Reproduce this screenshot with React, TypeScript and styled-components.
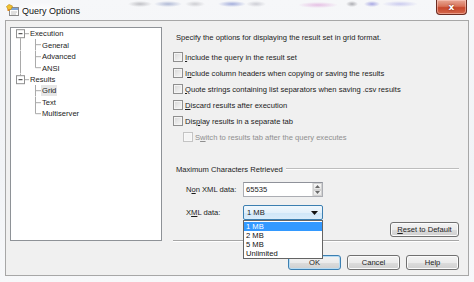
import React from "react";
import styled, { createGlobalStyle } from "styled-components";

const GlobalStyle = createGlobalStyle`
  html, body { margin: 0; padding: 0; background: #ffffff; }
  body { font-family: "Liberation Sans", Arial, sans-serif; }
  * { box-sizing: border-box; }
`;

const Frame = styled.div`
  position: relative;
  width: 474px;
  height: 282px;
  overflow: hidden;
  display: flex;
  flex-direction: column;
  background: linear-gradient(180deg, #f6f7f9 0%, #f1f3f6 60%, #f7f8fa 100%);
  font-family: "Liberation Sans", Arial, sans-serif;
  color: #1b1b1b;
`;

const TitleBar = styled.div`
  height: 20px;
  flex-shrink: 0;
  display: flex;
  align-items: flex-start;
  padding-left: 6px;
  background:
    radial-gradient(ellipse 12px 3px at 140px 4px, rgba(90, 90, 100, 0.35), transparent),
    radial-gradient(ellipse 14px 3px at 168px 4px, rgba(90, 110, 170, 0.45), transparent),
    radial-gradient(ellipse 10px 3px at 195px 4px, rgba(110, 110, 120, 0.3), transparent),
    radial-gradient(ellipse 14px 3px at 232px 4px, rgba(80, 100, 190, 0.5), transparent),
    radial-gradient(ellipse 10px 3px at 256px 4px, rgba(110, 110, 130, 0.3), transparent),
    radial-gradient(ellipse 20px 3px at 318px 5px, rgba(200, 90, 190, 0.35), transparent),
    radial-gradient(ellipse 6px 3px at 352px 4px, rgba(60, 60, 70, 0.4), transparent),
    radial-gradient(ellipse 8px 3px at 372px 4px, rgba(70, 70, 200, 0.45), transparent),
    radial-gradient(ellipse 18px 3px at 400px 4px, rgba(120, 120, 220, 0.35), transparent),
    radial-gradient(ellipse 30px 8px at 40px 10px, rgba(255, 255, 255, 0.9), transparent);
`;

const TitleIcon = styled.svg`
  margin-top: 4px;
  flex-shrink: 0;
`;

const TitleText = styled.div`
  margin-left: 3px;
  font-size: 9px;
  line-height: 22px;
  color: #111;
`;

const CloseButton = styled.div`
  margin-left: auto;
  margin-right: 7px;
  width: 31px;
  height: 15px;
  border: 1px solid #6b2c22;
  border-top: none;
  border-radius: 0 0 4px 4px;
  background: linear-gradient(180deg, #e8a795 0%, #d87359 45%, #c7472c 55%, #d4694d 100%);
  box-shadow: inset 0 0 0 1px rgba(255, 210, 200, 0.5);
  display: flex;
  align-items: center;
  justify-content: center;
  color: #ffffff;
  font-size: 9px;
  font-weight: bold;
  font-family: "DejaVu Sans", sans-serif;
  text-shadow: 0 0 2px #6b2010;
`;

const Body = styled.div`
  margin: 0 5px;
  height: 256px;
  border: 1px solid #a7a7a7;
  background: #f0f0f0;
  display: flex;
  flex-direction: column;
  padding: 6px 9px 0 4px;
`;

const Main = styled.div`
  display: flex;
  align-items: flex-start;
`;

const Tree = styled.div`
  width: 152px;
  height: 214px;
  flex-shrink: 0;
  border: 1px solid #8e9297;
  background: #ffffff;
  font-size: 7.6px;
`;

const TreeRow = styled.div`
  height: 11.45px;
  display: flex;
  align-items: center;
  white-space: nowrap;
`;

const Guide = styled.svg`
  flex-shrink: 0;
  display: block;
`;

const TreeLabel = styled.span<{ $selected?: boolean }>`
  padding: 0 1px;
  line-height: 11px;
  background: ${(p) => (p.$selected ? "#e6e6e6" : "transparent")};
`;

const RightPanel = styled.div`
  margin-left: 11px;
  width: 286px;
  display: flex;
  flex-direction: column;
  padding-top: 5px;
  font-size: 7.6px;
`;

const Description = styled.div`
  height: 12px;
  line-height: 12px;
  margin-left: 3px;
  white-space: nowrap;
`;

const CheckList = styled.div`
  margin-top: 5px;
  display: flex;
  flex-direction: column;
`;

const CheckRow = styled.div<{ $indent?: number; $disabled?: boolean }>`
  height: 16px;
  display: flex;
  align-items: center;
  padding-left: ${(p) => p.$indent ?? 0}px;
  color: ${(p) => (p.$disabled ? "#8f8f8f" : "inherit")};
  white-space: nowrap;
`;

const Box = styled.span<{ $disabled?: boolean }>`
  width: 10px;
  height: 10px;
  flex-shrink: 0;
  margin-right: 2px;
  border: 1px solid ${(p) => (p.$disabled ? "#c4c4c4" : "#8f8f8f")};
  background: ${(p) =>
    p.$disabled
      ? "#f4f4f4"
      : "linear-gradient(135deg, #d6d6d6 0%, #e8e8e8 50%, #f8f8f8 100%)"};
  box-shadow: inset 0 0 0 1px ${(p) => (p.$disabled ? "#f8f8f8" : "#f4f4f4")};
`;

const GroupHeader = styled.div`
  margin-top: 18px;
  height: 12px;
  display: flex;
  align-items: center;
`;

const GroupTitle = styled.span`
  margin-left: 3px;
  white-space: nowrap;
`;

const GroupLine = styled.span`
  flex: 1;
  margin-left: 3px;
  height: 2px;
  border-top: 1px solid #bdbdbd;
  border-bottom: 1px solid #ffffff;
`;

const FieldRow = styled.div<{ $gap: number }>`
  margin-top: ${(p) => p.$gap}px;
  height: 15px;
  display: flex;
  align-items: center;
  padding-left: 13px;
`;

const FieldLabel = styled.span`
  width: 57px;
  flex-shrink: 0;
  white-space: nowrap;
`;

const TextInput = styled.div`
  width: 80px;
  height: 15px;
  border: 1px solid #abadb3;
  border-top-color: #8f929a;
  background: #ffffff;
  display: flex;
  align-items: center;
  padding-left: 2px;
`;

const InputValue = styled.span`
  flex: 1;
`;

const Spinner = styled.div`
  width: 10px;
  height: 13px;
  display: flex;
  flex-direction: column;
  border-left: 1px solid #e3e3e3;
`;

const SpinHalf = styled.div`
  flex: 1;
  display: flex;
  align-items: center;
  justify-content: center;
  background: linear-gradient(180deg, #f7f7f7, #e6e6e6);
  border: 1px solid #d2d2d2;
`;

const Combo = styled.div`
  position: relative;
  width: 80px;
  height: 15px;
  border: 1px solid #3c7fb1;
  border-radius: 2px;
  background: linear-gradient(180deg, #f1f8fd 0%, #e2f0fb 50%, #cfe6f8 51%, #d9ecfa 100%);
  display: flex;
  align-items: center;
  padding-left: 3px;
`;

const ComboValue = styled.span`
  flex: 1;
`;

const ComboArrow = styled.svg`
  margin-right: 4px;
  display: block;
`;

const DropList = styled.div`
  position: absolute;
  top: 14px;
  left: -1px;
  width: 80px;
  height: 39px;
  border: 1px solid #646464;
  background: #ffffff;
  z-index: 5;
  display: flex;
  flex-direction: column;
  padding-top: 1px;
`;

const DropItem = styled.div<{ $active?: boolean }>`
  height: 9.2px;
  line-height: 9px;
  padding-left: 2px;
  color: ${(p) => (p.$active ? "#ffffff" : "#111")};
  background: ${(p) => (p.$active ? "#3399ff" : "transparent")};
`;

const ResetRow = styled.div`
  margin-top: 2px;
  display: flex;
  justify-content: flex-end;
`;

const Separator = styled.div`
  margin-top: 3px;
  height: 2px;
  border-top: 1px solid #a6a6a6;
  border-bottom: 1px solid #ffffff;
`;

const Button = styled.div<{ $width: number; $default?: boolean }>`
  width: ${(p) => p.$width}px;
  height: 15px;
  border: 1px solid ${(p) => (p.$default ? "#3c7fb1" : "#707070")};
  border-radius: 3px;
  background: linear-gradient(180deg, #f3f3f3 0%, #ebebeb 50%, #dddddd 51%, #cfcfcf 100%);
  box-shadow: inset 0 0 0 1px ${(p) => (p.$default ? "#b6dcf4" : "#fbfbfb")};
  display: flex;
  align-items: center;
  justify-content: center;
  font-size: 7.6px;
  white-space: nowrap;
`;

const ButtonRow = styled.div`
  margin-top: 13px;
  display: flex;
  justify-content: flex-end;
  gap: 6px;
`;

const LINE = "#a9a9a9";

function RootGuide({ up, down }: { up?: boolean; down?: boolean }) {
  return (
    <Guide width="18" height="11.45" viewBox="0 0 18 11.45">
      {up && <line x1="9.5" y1="0" x2="9.5" y2="1.7" stroke={LINE} />}
      {down && <line x1="9.5" y1="10.2" x2="9.5" y2="11.45" stroke={LINE} />}
      <rect x="5.5" y="1.7" width="8" height="8" fill="#fff" stroke="#919191" />
      <line x1="7.5" y1="5.7" x2="11.5" y2="5.7" stroke="#333" />
      <line x1="14" y1="5.7" x2="18" y2="5.7" stroke={LINE} />
    </Guide>
  );
}

function ChildGuide({ trunk, last }: { trunk?: boolean; last?: boolean }) {
  return (
    <Guide width="30" height="11.45" viewBox="0 0 30 11.45">
      {trunk && <line x1="9.5" y1="0" x2="9.5" y2="11.45" stroke={LINE} />}
      <line x1="24.5" y1="0" x2="24.5" y2={last ? 5.7 : 11.45} stroke={LINE} />
      <line x1="24.5" y1="5.7" x2="30" y2="5.7" stroke={LINE} />
    </Guide>
  );
}

function Check({
  children,
  indent,
  disabled,
}: {
  children: React.ReactNode;
  indent?: number;
  disabled?: boolean;
}) {
  return (
    <CheckRow $indent={indent} $disabled={disabled}>
      <Box $disabled={disabled} />
      <span>{children}</span>
    </CheckRow>
  );
}

export default function App() {
  return (
    <>
      <GlobalStyle />
      <Frame>
        <TitleBar>
          <TitleIcon width="13" height="12" viewBox="0 0 13 12">
            <rect x="3.5" y="3.5" width="9" height="8" fill="#fdfdfd" stroke="#8a8a8a" />
            <rect x="4" y="4" width="8" height="2" fill="#7ea6d8" />
            <line x1="5" y1="8" x2="11" y2="8" stroke="#c0c0c0" />
            <line x1="5" y1="10" x2="10" y2="10" stroke="#c0c0c0" />
            <path d="M0.5 2.5 L3 0.5 L6.5 2 L5 5.5 L2 5.5 Z" fill="#f1c232" stroke="#b8860b" strokeWidth="0.6" />
            <rect x="1.5" y="5" width="2" height="2" fill="#e08a1e" />
          </TitleIcon>
          <TitleText>Query Options</TitleText>
          <CloseButton>x</CloseButton>
        </TitleBar>
        <Body>
          <Main>
            <Tree>
              <TreeRow>
                <RootGuide down />
                <TreeLabel>Execution</TreeLabel>
              </TreeRow>
              <TreeRow>
                <ChildGuide trunk />
                <TreeLabel>General</TreeLabel>
              </TreeRow>
              <TreeRow>
                <ChildGuide trunk />
                <TreeLabel>Advanced</TreeLabel>
              </TreeRow>
              <TreeRow>
                <ChildGuide trunk last />
                <TreeLabel>ANSI</TreeLabel>
              </TreeRow>
              <TreeRow>
                <RootGuide up />
                <TreeLabel>Results</TreeLabel>
              </TreeRow>
              <TreeRow>
                <ChildGuide />
                <TreeLabel $selected>Grid</TreeLabel>
              </TreeRow>
              <TreeRow>
                <ChildGuide />
                <TreeLabel>Text</TreeLabel>
              </TreeRow>
              <TreeRow>
                <ChildGuide last />
                <TreeLabel>Multiserver</TreeLabel>
              </TreeRow>
            </Tree>
            <RightPanel>
              <Description>
                Specify the options for displaying the result set in grid format.
              </Description>
              <CheckList>
                <Check>
                  <u>I</u>nclude the query in the result set
                </Check>
                <Check>
                  I<u>n</u>clude column headers when copying or saving the results
                </Check>
                <Check>
                  <u>Q</u>uote strings containing list separators when saving .csv results
                </Check>
                <Check>
                  <u>D</u>iscard results after execution
                </Check>
                <Check>
                  Dis<u>p</u>lay results in a separate tab
                </Check>
                <Check indent={10} disabled>
                  S<u>w</u>itch to results tab after the query executes
                </Check>
              </CheckList>
              <GroupHeader>
                <GroupTitle>Maximum Characters Retrieved</GroupTitle>
                <GroupLine />
              </GroupHeader>
              <FieldRow $gap={7}>
                <FieldLabel>
                  N<u>o</u>n XML data:
                </FieldLabel>
                <TextInput>
                  <InputValue>65535</InputValue>
                  <Spinner>
                    <SpinHalf>
                      <svg width="5" height="3" viewBox="0 0 5 3">
                        <path d="M0 3 L2.5 0 L5 3 Z" fill="#6a6a6a" />
                      </svg>
                    </SpinHalf>
                    <SpinHalf>
                      <svg width="5" height="3" viewBox="0 0 5 3">
                        <path d="M0 0 L2.5 3 L5 0 Z" fill="#6a6a6a" />
                      </svg>
                    </SpinHalf>
                  </Spinner>
                </TextInput>
              </FieldRow>
              <FieldRow $gap={8}>
                <FieldLabel>
                  X<u>M</u>L data:
                </FieldLabel>
                <Combo>
                  <ComboValue>1 MB</ComboValue>
                  <ComboArrow width="7" height="4" viewBox="0 0 7 4">
                    <path d="M0 0 L7 0 L3.5 4 Z" fill="#111" />
                  </ComboArrow>
                  <DropList>
                    <DropItem $active>1 MB</DropItem>
                    <DropItem>2 MB</DropItem>
                    <DropItem>5 MB</DropItem>
                    <DropItem>Unlimited</DropItem>
                  </DropList>
                </Combo>
              </FieldRow>
              <ResetRow>
                <Button $width={69}>
                  <span>
                    <u>R</u>eset to Default
                  </span>
                </Button>
              </ResetRow>
              <Separator />
            </RightPanel>
          </Main>
          <ButtonRow>
            <Button $width={53} $default>
              OK
            </Button>
            <Button $width={53}>Cancel</Button>
            <Button $width={53}>Help</Button>
          </ButtonRow>
        </Body>
      </Frame>
    </>
  );
}
